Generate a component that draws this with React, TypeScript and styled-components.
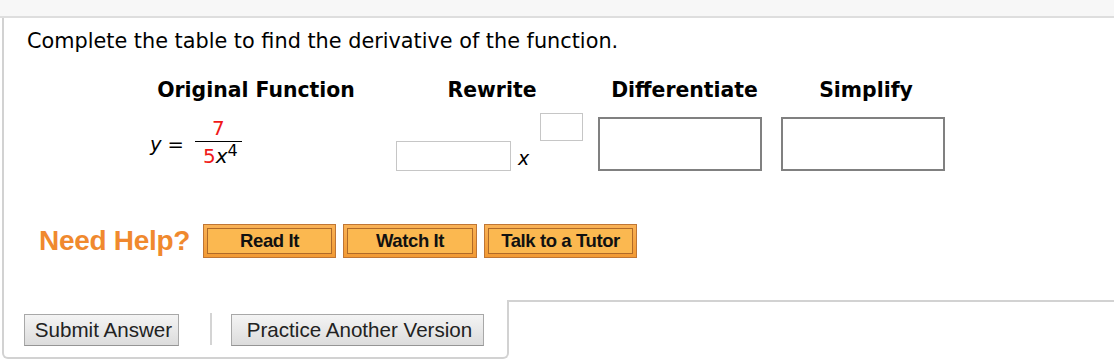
import styled, { createGlobalStyle } from 'styled-components';

const GlobalStyle = createGlobalStyle`
  html, body {
    margin: 0;
    padding: 0;
    background: #ffffff;
  }
  body {
    font-family: "DejaVu Sans", Verdana, sans-serif;
    color: #000;
  }
`;

const TopBand = styled.div`
  height: 16px;
  background: #f7f7f7;
  border-bottom: 2px solid #dedede;
`;

const Panel = styled.div`
  margin-left: 2px;
  display: flex;
  flex-direction: column;
`;

const Content = styled.div`
  height: 282px;
  box-sizing: border-box;
  border-left: 2px solid #d2d2d2;
  padding: 12px 0 0 23px;
`;

const Instruction = styled.p`
  margin: 0;
  font-size: 20.8px;
  line-height: 22px;
`;

const Table = styled.div`
  display: grid;
  grid-template-columns: 212px 236px 173px 190px;
  grid-template-rows: 22px 58px;
  row-gap: 12px;
  margin: 27px 0 0 123px;
`;

const Head = styled.div<{ $offset?: number }>`
  font-weight: bold;
  font-size: 20.4px;
  line-height: 22px;
  text-align: center;
  white-space: nowrap;
  padding-left: ${(p) => p.$offset || 0}px;
`;

const Cell = styled.div<{ $pad?: number }>`
  display: flex;
  align-items: flex-end;
  padding-left: ${(p) => p.$pad || 0}px;
`;

const Expr = styled.div`
  display: flex;
  align-items: center;
  font-size: 19.5px;
`;

const Lhs = styled.span`
  padding-top: 5px;
`;

const Var = styled.span`
  font-style: italic;
`;

const Equals = styled.span`
  margin: 0 11px 0 6px;
`;

const Fraction = styled.span`
  display: inline-flex;
  flex-direction: column;
  align-items: center;
`;

const Numer = styled.span`
  color: #f01818;
  padding-bottom: 2px;
  border-bottom: 1px solid #000;
  width: 47px;
  text-align: center;
  line-height: 22px;
  font-size: 20px;
`;

const Denom = styled.span`
  line-height: 22px;
  padding: 3px 0 0 4px;
  font-size: 20px;
`;

const Red = styled.span`
  color: #f01818;
`;

const Sup = styled.sup`
  font-size: 16px;
  vertical-align: 7px;
  line-height: 0;
`;

const Field = styled.div<{ $w: number; $h: number; $strong?: boolean }>`
  width: ${(p) => p.$w}px;
  height: ${(p) => p.$h}px;
  box-sizing: border-box;
  border: ${(p) => (p.$strong ? '2px solid #808080' : '1px solid #c6c6c6')};
  background: #fff;
`;

const TimesX = styled.span`
  font-style: italic;
  font-size: 19px;
  margin: 0 11px 2px 7px;
`;

const Exponent = styled(Field)`
  align-self: flex-start;
`;

const HelpRow = styled.div`
  display: flex;
  align-items: center;
  gap: 7px;
  margin: 53px 0 0 12px;
`;

const HelpLabel = styled.span`
  font-family: "Liberation Sans", Arial, sans-serif;
  font-size: 28px;
  font-weight: bold;
  color: #f0892e;
  margin-right: 6px;
  letter-spacing: -0.3px;
`;

const HelpButton = styled.button<{ $w: number }>`
  width: ${(p) => p.$w}px;
  height: 34px;
  padding: 3px;
  border: 1px solid #c07634;
  background: linear-gradient(#f9b256, #f29a34);
  cursor: pointer;
  display: flex;
`;

const HelpFace = styled.span`
  flex: 1;
  display: flex;
  align-items: center;
  justify-content: center;
  border: 1px solid #b06a28;
  background: #fbb850;
  font-family: "Liberation Sans", Arial, sans-serif;
  font-weight: bold;
  font-size: 18.5px;
  color: #111;
  letter-spacing: -0.4px;
`;

const FooterRow = styled.div`
  display: flex;
  height: 59px;
`;

const FooterBox = styled.div`
  width: 507px;
  box-sizing: border-box;
  border: 2px solid #d2d2d2;
  border-top: none;
  border-radius: 0 0 6px 6px;
  display: flex;
  align-items: flex-start;
  padding: 14px 0 0 20px;
`;

const FooterFill = styled.div`
  flex: 1;
  border-top: 2px solid #d2d2d2;
`;

const GrayButton = styled.button<{ $w: number }>`
  width: ${(p) => p.$w}px;
  height: 32px;
  padding: 0 0 0 4px;
  border: 1px solid #a8a8a8;
  border-bottom-color: #959595;
  background: linear-gradient(#f4f4f4, #dcdcdc);
  font-family: "Liberation Sans", Arial, sans-serif;
  font-size: 20.6px;
  color: #222;
  white-space: nowrap;
  cursor: pointer;
`;

const Divider = styled.span`
  width: 2px;
  height: 32px;
  background: #d4d4d4;
  margin: -1px 19px 0 31px;
`;

export default function App() {
  return (
    <>
      <GlobalStyle />
      <TopBand />
      <Panel>
        <Content>
          <Instruction>Complete the table to find the derivative of the function.</Instruction>
          <Table>
            <Head>Original Function</Head>
            <Head $offset={24}>Rewrite</Head>
            <Head>Differentiate</Head>
            <Head>Simplify</Head>

            <Expr>
              <Lhs>
                <Var>y</Var>
                <Equals>=</Equals>
              </Lhs>
              <Fraction>
                <Numer>7</Numer>
                <Denom>
                  <Red>5</Red>
                  <Var>x</Var>
                  <Sup>4</Sup>
                </Denom>
              </Fraction>
            </Expr>
            <Cell $pad={34}>
              <Field $w={115} $h={30} />
              <TimesX>x</TimesX>
              <Exponent $w={43} $h={28} />
            </Cell>
            <Cell>
              <Field $w={164} $h={54} $strong />
            </Cell>
            <Cell $pad={10}>
              <Field $w={164} $h={54} $strong />
            </Cell>
          </Table>
          <HelpRow>
            <HelpLabel>Need Help?</HelpLabel>
            <HelpButton $w={133}><HelpFace>Read It</HelpFace></HelpButton>
            <HelpButton $w={134}><HelpFace>Watch It</HelpFace></HelpButton>
            <HelpButton $w={153}><HelpFace>Talk to a Tutor</HelpFace></HelpButton>
          </HelpRow>
        </Content>
        <FooterRow>
          <FooterBox>
            <GrayButton $w={155}>Submit Answer</GrayButton>
            <Divider />
            <GrayButton $w={253}>Practice Another Version</GrayButton>
          </FooterBox>
          <FooterFill />
        </FooterRow>
      </Panel>
    </>
  );
}
